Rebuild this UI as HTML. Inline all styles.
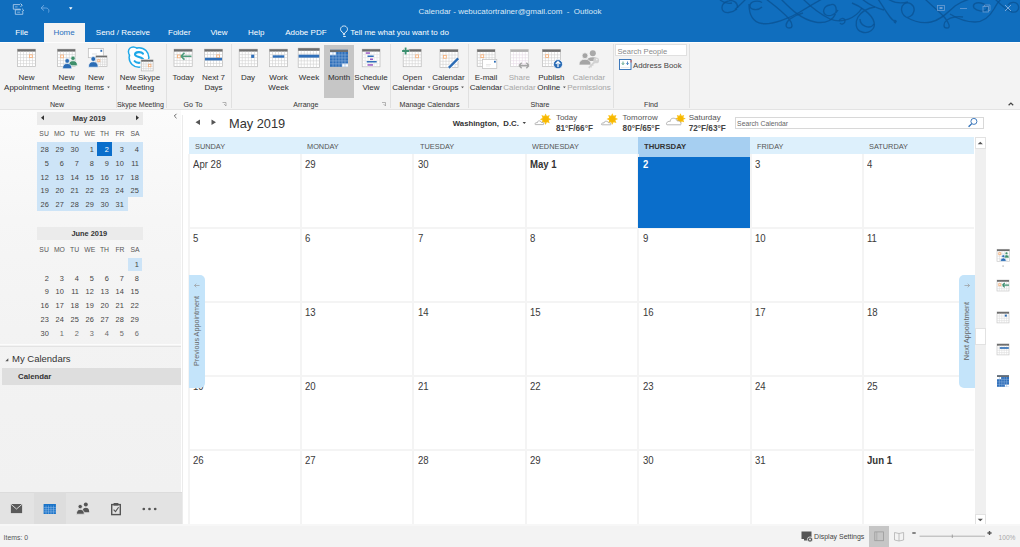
<!DOCTYPE html><html><head><meta charset="utf-8"><style>
*{margin:0;padding:0;box-sizing:border-box}
html,body{width:1020px;height:547px;overflow:hidden;background:#fff;font-family:"Liberation Sans",sans-serif;color:#444}
.a{position:absolute;white-space:nowrap;line-height:1}
.c{position:absolute;white-space:nowrap;line-height:1;transform:translateX(-50%)}
.r{position:absolute;white-space:nowrap;line-height:1;transform:translateX(-100%)}
svg{position:absolute;overflow:visible}
.s{-webkit-text-stroke:0.05px currentColor}
</style></head><body>
<div class="a" style="left:0px;top:0px;width:1020px;height:42px;background:#106ebe;"></div>
<svg style="left:700px;top:0px" width="320" height="42" viewBox="700 0 320 42"><path d="M737.5 8 C738 2 733 0 729 0.8 C723 1.8 721 6 722.5 10 C724.5 14 732 13 737 9" fill="none" stroke="#0a5294" stroke-width="1.35" opacity="0.8"/><path d="M735 9.5 C739 6 743 2 746 -1" fill="none" stroke="#0a5294" stroke-width="1.35" opacity="0.8"/><path d="M749 4 C749 14 752 22 762 23.5 C772 25 790 18 800 12 C808 7 815 3 822 -1" fill="none" stroke="#0a5294" stroke-width="1.35" opacity="0.8"/><path d="M762 2.5 C758 0 750 1 750 6 C750 10 758 11 762 7" fill="none" stroke="#0a5294" stroke-width="1.35" opacity="0.8"/><path d="M766 -1 C774 5 784 13 789 19 C793 24 793 28 789 28 C785 28 785 23 790 19 C794 16 798 14 803 13" fill="none" stroke="#0a5294" stroke-width="1.35" opacity="0.8"/><path d="M781 -1 C790 8 800 19 815 22 C826 24 834 20 836 12 C837 6 834 3 830 5 C823 6 822 13 826 15 C830 17 836 14 838 10" fill="none" stroke="#0a5294" stroke-width="1.35" opacity="0.8"/><path d="M803 -1 C808 4 816 12 830 19 C842 24 856 18 862 8" fill="none" stroke="#0a5294" stroke-width="1.35" opacity="0.8"/><path d="M839 21 C840 18 845 17 845 21 C845 24 841 25 840 23" fill="none" stroke="#0a5294" stroke-width="1.35" opacity="0.8"/><path d="M852 3 C860 6 872 14 874 22 C876 30 868 34 862 32 C855 30 855 22 858 17 C862 11 868 8 875 7" fill="none" stroke="#0a5294" stroke-width="1.35" opacity="0.8"/><path d="M860 19 C860 26 870 30 874 24" fill="none" stroke="#0a5294" stroke-width="1.35" opacity="0.8"/><path d="M862 -1 C868 4 876 8 884 10" fill="none" stroke="#0a5294" stroke-width="1.35" opacity="0.8"/><path d="M878 -1 C882 5 886 12 890 17 C893 21 897 23 896 21 C894 19 893 22 896 23" fill="none" stroke="#0a5294" stroke-width="1.35" opacity="0.8"/><path d="M906 17 C901 14 900 7 904 4 C909 1 915 5 914 11 C913 16 908 18 906 17 C913 21 922 24 931 22 C941 20 948 12 955 6 C961 2 966 0 970 -1" fill="none" stroke="#0a5294" stroke-width="1.35" opacity="0.8"/><path d="M925 -1 C932 6 940 12 945 18 C949 23 951 28 947 28 C943 28 943 23 947 20 C951 17 958 16 963 17" fill="none" stroke="#0a5294" stroke-width="1.35" opacity="0.8"/><path d="M950 14 C958 19 966 22 975 22 C984 22 990 16 994 9 C996 5 998 2 1001 -1" fill="none" stroke="#0a5294" stroke-width="1.35" opacity="0.8"/><path d="M974 8 C972 4 976 2 981 3 C986 4 989 8 986 10 C983 12 977 11 974 8" fill="none" stroke="#0a5294" stroke-width="1.35" opacity="0.8"/><path d="M995 -1 C1000 4 1006 10 1012 12 C1017 13 1020 9 1018 5 C1016 1 1010 2 1008 5" fill="none" stroke="#0a5294" stroke-width="1.35" opacity="0.8"/><path d="M888 -1 C894 3 900 4 908 2" fill="none" stroke="#0a5294" stroke-width="1.35" opacity="0.8"/><path d="M720 0 C724 3 728 4 732 3" fill="none" stroke="#0a5294" stroke-width="1.35" opacity="0.8"/></svg>
<svg style="left:930px;top:0px" width="90" height="20" viewBox="930 0 90 20"><rect x="937.5" y="5.5" width="7" height="5" fill="none" stroke="#6b9dd3" stroke-width="0.8"/><rect x="939.5" y="7" width="3" height="2" fill="#6b9dd3"/><line x1="960" y1="8.5" x2="967" y2="8.5" stroke="#6b9dd3" stroke-width="0.8"/><rect x="983" y="6.5" width="5.5" height="5.5" fill="none" stroke="#6b9dd3" stroke-width="0.8"/><path d="M984.5 6.5 V5 H990 V10.5 H988.5" fill="none" stroke="#6b9dd3" stroke-width="0.8"/><path d="M1005 5 L1011 11 M1011 5 L1005 11" stroke="#86b0df" stroke-width="0.9"/></svg>
<svg style="left:0px;top:0px" width="90" height="20" viewBox="0 0 90 20"><path d="M13.3 4.6 H20 M13.3 4.6 V9.2 H20.5" fill="none" stroke="#c4daf2" stroke-width="0.75"/><path d="M15.3 9.8 V14.3 H22.8 V11.5 M15.3 9.8 H21" fill="none" stroke="#c4daf2" stroke-width="0.75"/><path d="M15 6.9 h2.6 M17.2 12.2 h2.8" stroke="#a9c8ea" stroke-width="0.7"/><path d="M20.6 3.6 l1.6 1.6 l-1.6 1.6 M22.2 8.8 l1.4 1.4 l-1.4 1.4" fill="none" stroke="#e6f0fa" stroke-width="0.8"/><path d="M41 8 L44 5.2 M41 8 L44 10.6 M41.2 8 H45.5 C48.5 8 49.5 10 48.5 12.5" fill="none" stroke="#6aa6e0" stroke-width="1"/><path d="M69 7.2 H72.5 L70.75 9.8 Z" fill="#fff"/></svg>
<div class="c" style="left:510.00px;top:8.00px;font-size:8px;color:#dae8f6;font-weight:normal;">Calendar - webucatortrainer@gmail.com &nbsp;- &nbsp;Outlook</div>
<div class="a" style="left:44px;top:22.5px;width:41px;height:20px;background:#f3f3f3;"></div>
<div class="a" style="left:15.30px;top:29.00px;font-size:8px;color:#ffffff;font-weight:normal;">File</div>
<div class="a" style="left:95.80px;top:29.00px;font-size:8px;color:#ffffff;font-weight:normal;">Send / Receive</div>
<div class="a" style="left:168.00px;top:29.00px;font-size:8px;color:#ffffff;font-weight:normal;">Folder</div>
<div class="a" style="left:210.40px;top:29.00px;font-size:8px;color:#ffffff;font-weight:normal;">View</div>
<div class="a" style="left:248.00px;top:29.00px;font-size:8px;color:#ffffff;font-weight:normal;">Help</div>
<div class="a" style="left:285.20px;top:29.00px;font-size:8px;color:#ffffff;font-weight:normal;">Adobe PDF</div>
<div class="a" style="left:53.40px;top:29.00px;font-size:8px;color:#2a6fbd;font-weight:normal;">Home</div>
<svg style="left:330px;top:20px" width="30" height="22" viewBox="330 20 30 22"><path d="M343.2 36.5 h2.6 M343.4 34.8 V33 C341.2 31.8 340.2 30 340.6 28.6 C341.2 26.6 342.6 26 343.5 26 h1 C345.4 26 346.8 26.6 347.4 28.6 C347.8 30 346.8 31.8 344.6 33 V34.8 Z" fill="none" stroke="#fff" stroke-width="0.85"/></svg>
<div class="a" style="left:350.20px;top:29.00px;font-size:8px;color:#ffffff;font-weight:normal;">Tell me what you want to do</div>
<div class="a" style="left:0px;top:42px;width:1020px;height:67px;background:#f3f3f3;"></div>
<div class="a" style="left:0px;top:42px;width:1020px;height:1px;background:#fdfdfd;"></div>
<div class="a" style="left:0px;top:108.5px;width:1020px;height:1.5px;background:#e3e3e3;"></div>
<div class="a" style="left:115.5px;top:44px;width:1px;height:64px;background:#e0e0e0;"></div>
<div class="a" style="left:166px;top:44px;width:1px;height:64px;background:#e0e0e0;"></div>
<div class="a" style="left:231px;top:44px;width:1px;height:64px;background:#e0e0e0;"></div>
<div class="a" style="left:390px;top:44px;width:1px;height:64px;background:#e0e0e0;"></div>
<div class="a" style="left:467.5px;top:44px;width:1px;height:64px;background:#e0e0e0;"></div>
<div class="a" style="left:613px;top:44px;width:1px;height:64px;background:#e0e0e0;"></div>
<div class="a" style="left:688.5px;top:44px;width:1px;height:64px;background:#e0e0e0;"></div>
<div class="a" style="left:324px;top:45px;width:30px;height:53px;background:#c6c6c6;"></div>
<div class="c s" style="left:26.50px;top:74.00px;font-size:8px;color:#333;font-weight:normal;">New</div>
<div class="c s" style="left:26.50px;top:84.00px;font-size:8px;color:#333;font-weight:normal;">Appointment</div>
<div class="c s" style="left:66.50px;top:74.00px;font-size:8px;color:#333;font-weight:normal;">New</div>
<div class="c s" style="left:66.50px;top:84.00px;font-size:8px;color:#333;font-weight:normal;">Meeting</div>
<div class="c s" style="left:96.00px;top:74.00px;font-size:8px;color:#333;font-weight:normal;">New</div>
<div class="r s" style="left:104.10px;top:84.00px;font-size:8px;color:#333;font-weight:normal;">Items</div>
<div class="c s" style="left:140.00px;top:74.00px;font-size:8px;color:#333;font-weight:normal;">New Skype</div>
<div class="c s" style="left:140.00px;top:84.00px;font-size:8px;color:#333;font-weight:normal;">Meeting</div>
<div class="c s" style="left:183.30px;top:74.00px;font-size:8px;color:#333;font-weight:normal;">Today</div>
<div class="c s" style="left:213.50px;top:74.00px;font-size:8px;color:#333;font-weight:normal;">Next 7</div>
<div class="c s" style="left:213.50px;top:84.00px;font-size:8px;color:#333;font-weight:normal;">Days</div>
<div class="c s" style="left:248.00px;top:74.00px;font-size:8px;color:#333;font-weight:normal;">Day</div>
<div class="c s" style="left:278.50px;top:74.00px;font-size:8px;color:#333;font-weight:normal;">Work</div>
<div class="c s" style="left:278.50px;top:84.00px;font-size:8px;color:#333;font-weight:normal;">Week</div>
<div class="c s" style="left:309.00px;top:74.00px;font-size:8px;color:#333;font-weight:normal;">Week</div>
<div class="c s" style="left:339.00px;top:74.00px;font-size:8px;color:#333;font-weight:normal;">Month</div>
<div class="c s" style="left:371.00px;top:74.00px;font-size:8px;color:#333;font-weight:normal;">Schedule</div>
<div class="c s" style="left:371.00px;top:84.00px;font-size:8px;color:#333;font-weight:normal;">View</div>
<div class="c s" style="left:412.40px;top:74.00px;font-size:8px;color:#333;font-weight:normal;">Open</div>
<div class="r s" style="left:424.80px;top:84.00px;font-size:8px;color:#333;font-weight:normal;">Calendar</div>
<div class="c s" style="left:448.40px;top:74.00px;font-size:8px;color:#333;font-weight:normal;">Calendar</div>
<div class="r s" style="left:458.50px;top:84.00px;font-size:8px;color:#333;font-weight:normal;">Groups</div>
<div class="c s" style="left:486.00px;top:74.00px;font-size:8px;color:#333;font-weight:normal;">E-mail</div>
<div class="c s" style="left:486.00px;top:84.00px;font-size:8px;color:#333;font-weight:normal;">Calendar</div>
<div class="c s" style="left:519.40px;top:74.00px;font-size:8px;color:#aaaaaa;font-weight:normal;">Share</div>
<div class="c s" style="left:519.40px;top:84.00px;font-size:8px;color:#aaaaaa;font-weight:normal;">Calendar</div>
<div class="c s" style="left:551.30px;top:74.00px;font-size:8px;color:#333;font-weight:normal;">Publish</div>
<div class="r s" style="left:560.30px;top:84.00px;font-size:8px;color:#333;font-weight:normal;">Online</div>
<div class="c s" style="left:589.00px;top:74.00px;font-size:8px;color:#aaaaaa;font-weight:normal;">Calendar</div>
<div class="c s" style="left:589.00px;top:84.00px;font-size:8px;color:#aaaaaa;font-weight:normal;">Permissions</div>
<div class="c s" style="left:57.00px;top:102.00px;font-size:7.1px;color:#3a3a3a;font-weight:normal;">New</div>
<div class="c s" style="left:140.50px;top:102.00px;font-size:7.1px;color:#3a3a3a;font-weight:normal;">Skype Meeting</div>
<div class="c s" style="left:193.00px;top:102.00px;font-size:7.1px;color:#3a3a3a;font-weight:normal;">Go To</div>
<div class="c s" style="left:305.80px;top:102.00px;font-size:7.1px;color:#3a3a3a;font-weight:normal;">Arrange</div>
<div class="c s" style="left:429.50px;top:102.00px;font-size:7.1px;color:#3a3a3a;font-weight:normal;">Manage Calendars</div>
<div class="c s" style="left:540.00px;top:102.00px;font-size:7.1px;color:#3a3a3a;font-weight:normal;">Share</div>
<div class="c s" style="left:651.00px;top:102.00px;font-size:7.1px;color:#3a3a3a;font-weight:normal;">Find</div>
<svg style="left:0px;top:0px" width="1020" height="547" viewBox="0 0 1020 547"><rect x="17.5" y="49.2" width="18" height="17.4" fill="#fff" stroke="#b8b8b8" stroke-width="0.7"/><rect x="17.5" y="49.2" width="18" height="2.4" fill="#6e6e6e"/><line x1="20.50" y1="51.6" x2="20.50" y2="66.6" stroke="#d2d2d2" stroke-width="0.6"/><line x1="23.50" y1="51.6" x2="23.50" y2="66.6" stroke="#d2d2d2" stroke-width="0.6"/><line x1="26.50" y1="51.6" x2="26.50" y2="66.6" stroke="#d2d2d2" stroke-width="0.6"/><line x1="29.50" y1="51.6" x2="29.50" y2="66.6" stroke="#d2d2d2" stroke-width="0.6"/><line x1="32.50" y1="51.6" x2="32.50" y2="66.6" stroke="#d2d2d2" stroke-width="0.6"/><line x1="17.5" y1="54.60" x2="35.5" y2="54.60" stroke="#d2d2d2" stroke-width="0.6"/><line x1="17.5" y1="57.60" x2="35.5" y2="57.60" stroke="#d2d2d2" stroke-width="0.6"/><line x1="17.5" y1="60.60" x2="35.5" y2="60.60" stroke="#d2d2d2" stroke-width="0.6"/><line x1="17.5" y1="63.60" x2="35.5" y2="63.60" stroke="#d2d2d2" stroke-width="0.6"/><rect x="29.5" y="54.8" width="2.8" height="2.8" fill="#fff" stroke="#f6b07a" stroke-width="0.85"/><rect x="57.5" y="49.2" width="17.7" height="17.4" fill="#fff" stroke="#b8b8b8" stroke-width="0.7"/><rect x="57.5" y="49.2" width="17.7" height="2.4" fill="#6e6e6e"/><line x1="60.45" y1="51.6" x2="60.45" y2="66.6" stroke="#d2d2d2" stroke-width="0.6"/><line x1="63.40" y1="51.6" x2="63.40" y2="66.6" stroke="#d2d2d2" stroke-width="0.6"/><line x1="66.35" y1="51.6" x2="66.35" y2="66.6" stroke="#d2d2d2" stroke-width="0.6"/><line x1="69.30" y1="51.6" x2="69.30" y2="66.6" stroke="#d2d2d2" stroke-width="0.6"/><line x1="72.25" y1="51.6" x2="72.25" y2="66.6" stroke="#d2d2d2" stroke-width="0.6"/><line x1="57.5" y1="54.60" x2="75.2" y2="54.60" stroke="#d2d2d2" stroke-width="0.6"/><line x1="57.5" y1="57.60" x2="75.2" y2="57.60" stroke="#d2d2d2" stroke-width="0.6"/><line x1="57.5" y1="60.60" x2="75.2" y2="60.60" stroke="#d2d2d2" stroke-width="0.6"/><line x1="57.5" y1="63.60" x2="75.2" y2="63.60" stroke="#d2d2d2" stroke-width="0.6"/><rect x="60.7" y="55.0" width="2.8" height="2.8" fill="#fff" stroke="#f6b07a" stroke-width="0.85"/><circle cx="73" cy="58.3" r="2.1849999999999996" fill="#3f8f6b" stroke="#fff" stroke-width="0.6"/><path d="M68.63 65.71 Q68.63 60.769999999999996 73 60.769999999999996 Q77.37 60.769999999999996 77.37 65.71 Z" fill="#3f8f6b" stroke="#fff" stroke-width="0.6"/><circle cx="67.2" cy="60.9" r="2.3" fill="#2b6cb5" stroke="#fff" stroke-width="0.6"/><path d="M62.6 68.7 Q62.6 63.5 67.2 63.5 Q71.8 63.5 71.8 68.7 Z" fill="#2b6cb5" stroke="#fff" stroke-width="0.6"/><rect x="88.3" y="48.5" width="15" height="9.2" fill="#fff" stroke="#b8b8b8" stroke-width="0.7"/><rect x="100.4" y="49.8" width="1.8" height="2" fill="#2b6cb5"/><path d="M92 54 h5" stroke="#ccc" stroke-width="0.6"/><rect x="95.9" y="55.8" width="11.1" height="10.8" fill="#fff" stroke="#b8b8b8" stroke-width="0.7"/><rect x="95.9" y="55.8" width="11.1" height="1.6" fill="#6e6e6e"/><line x1="98.12" y1="57.4" x2="98.12" y2="66.6" stroke="#d2d2d2" stroke-width="0.6"/><line x1="100.34" y1="57.4" x2="100.34" y2="66.6" stroke="#d2d2d2" stroke-width="0.6"/><line x1="102.56" y1="57.4" x2="102.56" y2="66.6" stroke="#d2d2d2" stroke-width="0.6"/><line x1="104.78" y1="57.4" x2="104.78" y2="66.6" stroke="#d2d2d2" stroke-width="0.6"/><line x1="95.9" y1="59.70" x2="107.0" y2="59.70" stroke="#d2d2d2" stroke-width="0.6"/><line x1="95.9" y1="62.00" x2="107.0" y2="62.00" stroke="#d2d2d2" stroke-width="0.6"/><line x1="95.9" y1="64.30" x2="107.0" y2="64.30" stroke="#d2d2d2" stroke-width="0.6"/><rect x="97.8" y="59.7" width="2" height="2" fill="#fff" stroke="#f6b07a" stroke-width="0.85"/><circle cx="93.3" cy="59" r="2.415" fill="#2b6cb5" stroke="#fff" stroke-width="0.6"/><path d="M88.47 67.19 Q88.47 61.730000000000004 93.3 61.730000000000004 Q98.13 61.730000000000004 98.13 67.19 Z" fill="#2b6cb5" stroke="#fff" stroke-width="0.6"/><circle cx="139" cy="57.5" r="10.6" fill="#1ea8e8"/><circle cx="133.3" cy="51.8" r="5.6" fill="#1ea8e8"/><circle cx="144.7" cy="63.2" r="5.6" fill="#1ea8e8"/><circle cx="139" cy="57.5" r="9.1" fill="#fff"/><circle cx="133.3" cy="51.8" r="4.1" fill="#fff"/><circle cx="144.7" cy="63.2" r="4.1" fill="#fff"/><path d="M143 53.6 C141.6 51.6 135 51.4 135 54.6 C135 57.6 143.4 56.6 143.4 60.2 C143.4 63.4 136.6 63.6 134.6 61.2" fill="none" stroke="#1ea8e8" stroke-width="2.1" stroke-linecap="round"/><rect x="140.3" y="59" width="14" height="13" fill="#f3f3f3"/><rect x="141.3" y="59.9" width="11.8" height="11" fill="#fff" stroke="#b8b8b8" stroke-width="0.7"/><rect x="141.3" y="59.9" width="11.8" height="1.8" fill="#6e6e6e"/><line x1="143.66" y1="61.699999999999996" x2="143.66" y2="70.9" stroke="#d2d2d2" stroke-width="0.6"/><line x1="146.02" y1="61.699999999999996" x2="146.02" y2="70.9" stroke="#d2d2d2" stroke-width="0.6"/><line x1="148.38" y1="61.699999999999996" x2="148.38" y2="70.9" stroke="#d2d2d2" stroke-width="0.6"/><line x1="150.74" y1="61.699999999999996" x2="150.74" y2="70.9" stroke="#d2d2d2" stroke-width="0.6"/><line x1="141.3" y1="64.00" x2="153.10000000000002" y2="64.00" stroke="#d2d2d2" stroke-width="0.6"/><line x1="141.3" y1="66.30" x2="153.10000000000002" y2="66.30" stroke="#d2d2d2" stroke-width="0.6"/><line x1="141.3" y1="68.60" x2="153.10000000000002" y2="68.60" stroke="#d2d2d2" stroke-width="0.6"/><rect x="148.5" y="64.3" width="2.4" height="2.4" fill="#fff" stroke="#f6b07a" stroke-width="0.85"/><rect x="174" y="49.2" width="18.2" height="17.2" fill="#fff" stroke="#b8b8b8" stroke-width="0.7"/><rect x="174" y="49.2" width="18.2" height="2.4" fill="#6e6e6e"/><line x1="177.03" y1="51.6" x2="177.03" y2="66.4" stroke="#d2d2d2" stroke-width="0.6"/><line x1="180.07" y1="51.6" x2="180.07" y2="66.4" stroke="#d2d2d2" stroke-width="0.6"/><line x1="183.10" y1="51.6" x2="183.10" y2="66.4" stroke="#d2d2d2" stroke-width="0.6"/><line x1="186.13" y1="51.6" x2="186.13" y2="66.4" stroke="#d2d2d2" stroke-width="0.6"/><line x1="189.17" y1="51.6" x2="189.17" y2="66.4" stroke="#d2d2d2" stroke-width="0.6"/><line x1="174" y1="54.56" x2="192.2" y2="54.56" stroke="#d2d2d2" stroke-width="0.6"/><line x1="174" y1="57.52" x2="192.2" y2="57.52" stroke="#d2d2d2" stroke-width="0.6"/><line x1="174" y1="60.48" x2="192.2" y2="60.48" stroke="#d2d2d2" stroke-width="0.6"/><line x1="174" y1="63.44" x2="192.2" y2="63.44" stroke="#d2d2d2" stroke-width="0.6"/><rect x="177.5" y="55.0" width="2.8" height="2.8" fill="#fff" stroke="#f6b07a" stroke-width="0.85"/><path d="M181 56.2 H191.5 M181 56.2 L184.5 52.8 M181 56.2 L184.5 59.6" fill="none" stroke="#4f9c7c" stroke-width="1.6"/><rect x="204.5" y="49.2" width="18" height="17.2" fill="#fff" stroke="#b8b8b8" stroke-width="0.7"/><rect x="204.5" y="49.2" width="18" height="2.4" fill="#6e6e6e"/><line x1="207.50" y1="51.6" x2="207.50" y2="66.4" stroke="#d2d2d2" stroke-width="0.6"/><line x1="210.50" y1="51.6" x2="210.50" y2="66.4" stroke="#d2d2d2" stroke-width="0.6"/><line x1="213.50" y1="51.6" x2="213.50" y2="66.4" stroke="#d2d2d2" stroke-width="0.6"/><line x1="216.50" y1="51.6" x2="216.50" y2="66.4" stroke="#d2d2d2" stroke-width="0.6"/><line x1="219.50" y1="51.6" x2="219.50" y2="66.4" stroke="#d2d2d2" stroke-width="0.6"/><line x1="204.5" y1="54.56" x2="222.5" y2="54.56" stroke="#d2d2d2" stroke-width="0.6"/><line x1="204.5" y1="57.52" x2="222.5" y2="57.52" stroke="#d2d2d2" stroke-width="0.6"/><line x1="204.5" y1="60.48" x2="222.5" y2="60.48" stroke="#d2d2d2" stroke-width="0.6"/><line x1="204.5" y1="63.44" x2="222.5" y2="63.44" stroke="#d2d2d2" stroke-width="0.6"/><rect x="216.7" y="54.9" width="2.8" height="2.8" fill="#fff" stroke="#f6b07a" stroke-width="0.85"/><rect x="205" y="57.8" width="17" height="2.6" fill="#2f6fba"/><rect x="239.2" y="49.2" width="18.3" height="17.5" fill="#fff" stroke="#b8b8b8" stroke-width="0.7"/><rect x="239.2" y="49.2" width="18.3" height="2.4" fill="#6e6e6e"/><line x1="242.25" y1="51.6" x2="242.25" y2="66.7" stroke="#d2d2d2" stroke-width="0.6"/><line x1="245.30" y1="51.6" x2="245.30" y2="66.7" stroke="#d2d2d2" stroke-width="0.6"/><line x1="248.35" y1="51.6" x2="248.35" y2="66.7" stroke="#d2d2d2" stroke-width="0.6"/><line x1="251.40" y1="51.6" x2="251.40" y2="66.7" stroke="#d2d2d2" stroke-width="0.6"/><line x1="254.45" y1="51.6" x2="254.45" y2="66.7" stroke="#d2d2d2" stroke-width="0.6"/><line x1="239.2" y1="54.62" x2="257.5" y2="54.62" stroke="#d2d2d2" stroke-width="0.6"/><line x1="239.2" y1="57.64" x2="257.5" y2="57.64" stroke="#d2d2d2" stroke-width="0.6"/><line x1="239.2" y1="60.66" x2="257.5" y2="60.66" stroke="#d2d2d2" stroke-width="0.6"/><line x1="239.2" y1="63.68" x2="257.5" y2="63.68" stroke="#d2d2d2" stroke-width="0.6"/><rect x="251.2" y="54.7" width="3" height="3.2" fill="#2f6fba"/><rect x="269.5" y="49.2" width="18" height="17.5" fill="#fff" stroke="#b8b8b8" stroke-width="0.7"/><rect x="269.5" y="49.2" width="18" height="2.4" fill="#6e6e6e"/><line x1="272.50" y1="51.6" x2="272.50" y2="66.7" stroke="#d2d2d2" stroke-width="0.6"/><line x1="275.50" y1="51.6" x2="275.50" y2="66.7" stroke="#d2d2d2" stroke-width="0.6"/><line x1="278.50" y1="51.6" x2="278.50" y2="66.7" stroke="#d2d2d2" stroke-width="0.6"/><line x1="281.50" y1="51.6" x2="281.50" y2="66.7" stroke="#d2d2d2" stroke-width="0.6"/><line x1="284.50" y1="51.6" x2="284.50" y2="66.7" stroke="#d2d2d2" stroke-width="0.6"/><line x1="269.5" y1="54.62" x2="287.5" y2="54.62" stroke="#d2d2d2" stroke-width="0.6"/><line x1="269.5" y1="57.64" x2="287.5" y2="57.64" stroke="#d2d2d2" stroke-width="0.6"/><line x1="269.5" y1="60.66" x2="287.5" y2="60.66" stroke="#d2d2d2" stroke-width="0.6"/><line x1="269.5" y1="63.68" x2="287.5" y2="63.68" stroke="#d2d2d2" stroke-width="0.6"/><rect x="272.8" y="55.3" width="11.4" height="2.4" fill="#2f6fba"/><rect x="298.2" y="48.2" width="21.3" height="19.3" fill="#fff" stroke="#b8b8b8" stroke-width="0.7"/><rect x="298.2" y="48.2" width="21.3" height="2.6" fill="#6e6e6e"/><line x1="301.24" y1="50.800000000000004" x2="301.24" y2="67.5" stroke="#d2d2d2" stroke-width="0.6"/><line x1="304.29" y1="50.800000000000004" x2="304.29" y2="67.5" stroke="#d2d2d2" stroke-width="0.6"/><line x1="307.33" y1="50.800000000000004" x2="307.33" y2="67.5" stroke="#d2d2d2" stroke-width="0.6"/><line x1="310.37" y1="50.800000000000004" x2="310.37" y2="67.5" stroke="#d2d2d2" stroke-width="0.6"/><line x1="313.41" y1="50.800000000000004" x2="313.41" y2="67.5" stroke="#d2d2d2" stroke-width="0.6"/><line x1="316.46" y1="50.800000000000004" x2="316.46" y2="67.5" stroke="#d2d2d2" stroke-width="0.6"/><line x1="298.2" y1="54.14" x2="319.5" y2="54.14" stroke="#d2d2d2" stroke-width="0.6"/><line x1="298.2" y1="57.48" x2="319.5" y2="57.48" stroke="#d2d2d2" stroke-width="0.6"/><line x1="298.2" y1="60.82" x2="319.5" y2="60.82" stroke="#d2d2d2" stroke-width="0.6"/><line x1="298.2" y1="64.16" x2="319.5" y2="64.16" stroke="#d2d2d2" stroke-width="0.6"/><rect x="298.6" y="54.7" width="20.6" height="2.9" fill="#2f6fba"/><rect x="330" y="49.8" width="18" height="17" fill="#2f6fba"/><rect x="330" y="49.8" width="18" height="2.2" fill="#6e6e6e"/><rect x="330" y="52.2" width="6" height="3" fill="#fff"/><rect x="342" y="63.5" width="6" height="3.3" fill="#fff"/><line x1="333" y1="52" x2="333" y2="66.8" stroke="#8fb3dc" stroke-width="0.6"/><line x1="336" y1="52" x2="336" y2="66.8" stroke="#8fb3dc" stroke-width="0.6"/><line x1="339" y1="52" x2="339" y2="66.8" stroke="#8fb3dc" stroke-width="0.6"/><line x1="342" y1="52" x2="342" y2="66.8" stroke="#8fb3dc" stroke-width="0.6"/><line x1="345" y1="52" x2="345" y2="66.8" stroke="#8fb3dc" stroke-width="0.6"/><line x1="330" y1="54.96" x2="348" y2="54.96" stroke="#8fb3dc" stroke-width="0.6"/><line x1="330" y1="57.92" x2="348" y2="57.92" stroke="#8fb3dc" stroke-width="0.6"/><line x1="330" y1="60.88" x2="348" y2="60.88" stroke="#8fb3dc" stroke-width="0.6"/><line x1="330" y1="63.84" x2="348" y2="63.84" stroke="#8fb3dc" stroke-width="0.6"/><rect x="362.2" y="49.2" width="17.8" height="17.6" fill="#fff" stroke="#b8b8b8" stroke-width="0.7"/><rect x="362.2" y="49.2" width="17.8" height="2.4" fill="#6e6e6e"/><line x1="365.17" y1="51.6" x2="365.17" y2="66.80000000000001" stroke="#e0e0e0" stroke-width="0.6"/><line x1="368.13" y1="51.6" x2="368.13" y2="66.80000000000001" stroke="#e0e0e0" stroke-width="0.6"/><line x1="371.10" y1="51.6" x2="371.10" y2="66.80000000000001" stroke="#e0e0e0" stroke-width="0.6"/><line x1="374.07" y1="51.6" x2="374.07" y2="66.80000000000001" stroke="#e0e0e0" stroke-width="0.6"/><line x1="377.03" y1="51.6" x2="377.03" y2="66.80000000000001" stroke="#e0e0e0" stroke-width="0.6"/><line x1="362.2" y1="54.64" x2="380.0" y2="54.64" stroke="#e0e0e0" stroke-width="0.6"/><line x1="362.2" y1="57.68" x2="380.0" y2="57.68" stroke="#e0e0e0" stroke-width="0.6"/><line x1="362.2" y1="60.72" x2="380.0" y2="60.72" stroke="#e0e0e0" stroke-width="0.6"/><line x1="362.2" y1="63.76" x2="380.0" y2="63.76" stroke="#e0e0e0" stroke-width="0.6"/><rect x="365.8" y="52.3" width="4.2" height="1.5" fill="#9b59c5"/><rect x="367.5" y="55.5" width="6.2" height="1.5" fill="#2f6fba"/><rect x="370" y="58.5" width="3" height="1.5" fill="#9b59c5"/><rect x="366.7" y="61" width="10" height="1.5" fill="#2f6fba"/><rect x="367.5" y="64.2" width="5.5" height="1.5" fill="#9b59c5"/><rect x="403.2" y="49.3" width="18" height="17.4" fill="#fff" stroke="#b8b8b8" stroke-width="0.7"/><rect x="403.2" y="49.3" width="18" height="2.4" fill="#6e6e6e"/><line x1="406.20" y1="51.699999999999996" x2="406.20" y2="66.69999999999999" stroke="#d2d2d2" stroke-width="0.6"/><line x1="409.20" y1="51.699999999999996" x2="409.20" y2="66.69999999999999" stroke="#d2d2d2" stroke-width="0.6"/><line x1="412.20" y1="51.699999999999996" x2="412.20" y2="66.69999999999999" stroke="#d2d2d2" stroke-width="0.6"/><line x1="415.20" y1="51.699999999999996" x2="415.20" y2="66.69999999999999" stroke="#d2d2d2" stroke-width="0.6"/><line x1="418.20" y1="51.699999999999996" x2="418.20" y2="66.69999999999999" stroke="#d2d2d2" stroke-width="0.6"/><line x1="403.2" y1="54.70" x2="421.2" y2="54.70" stroke="#d2d2d2" stroke-width="0.6"/><line x1="403.2" y1="57.70" x2="421.2" y2="57.70" stroke="#d2d2d2" stroke-width="0.6"/><line x1="403.2" y1="60.70" x2="421.2" y2="60.70" stroke="#d2d2d2" stroke-width="0.6"/><line x1="403.2" y1="63.70" x2="421.2" y2="63.70" stroke="#d2d2d2" stroke-width="0.6"/><rect x="415.7" y="54.9" width="2.8" height="2.8" fill="#fff" stroke="#f6b07a" stroke-width="0.85"/><path d="M405.6 47.3 V54.7 M401.9 51 H409.3" stroke="#fff" stroke-width="3.2"/><path d="M405.6 47.5 V54.5 M402.1 51 H409.1" stroke="#3c9070" stroke-width="1.9"/><rect x="440" y="49.5" width="18" height="18" fill="#fff" stroke="#b8b8b8" stroke-width="0.7"/><rect x="440" y="49.5" width="18" height="2.4" fill="#6e6e6e"/><line x1="443.00" y1="51.9" x2="443.00" y2="67.5" stroke="#d2d2d2" stroke-width="0.6"/><line x1="446.00" y1="51.9" x2="446.00" y2="67.5" stroke="#d2d2d2" stroke-width="0.6"/><line x1="449.00" y1="51.9" x2="449.00" y2="67.5" stroke="#d2d2d2" stroke-width="0.6"/><line x1="452.00" y1="51.9" x2="452.00" y2="67.5" stroke="#d2d2d2" stroke-width="0.6"/><line x1="455.00" y1="51.9" x2="455.00" y2="67.5" stroke="#d2d2d2" stroke-width="0.6"/><line x1="440" y1="55.02" x2="458" y2="55.02" stroke="#d2d2d2" stroke-width="0.6"/><line x1="440" y1="58.14" x2="458" y2="58.14" stroke="#d2d2d2" stroke-width="0.6"/><line x1="440" y1="61.26" x2="458" y2="61.26" stroke="#d2d2d2" stroke-width="0.6"/><line x1="440" y1="64.38" x2="458" y2="64.38" stroke="#d2d2d2" stroke-width="0.6"/><rect x="443.5" y="55.4" width="2.8" height="2.8" fill="#fff" stroke="#f6b07a" stroke-width="0.85"/><path d="M448.6 68 L458.2 58.4" stroke="#fff" stroke-width="3.6"/><path d="M448.8 67.8 L458.2 58.4" stroke="#2b6cb5" stroke-width="2.4"/><rect x="477.2" y="49.5" width="17.8" height="16.8" fill="#fff" stroke="#b8b8b8" stroke-width="0.7"/><rect x="477.2" y="49.5" width="17.8" height="2.4" fill="#6e6e6e"/><line x1="480.17" y1="51.9" x2="480.17" y2="66.3" stroke="#d2d2d2" stroke-width="0.6"/><line x1="483.13" y1="51.9" x2="483.13" y2="66.3" stroke="#d2d2d2" stroke-width="0.6"/><line x1="486.10" y1="51.9" x2="486.10" y2="66.3" stroke="#d2d2d2" stroke-width="0.6"/><line x1="489.07" y1="51.9" x2="489.07" y2="66.3" stroke="#d2d2d2" stroke-width="0.6"/><line x1="492.03" y1="51.9" x2="492.03" y2="66.3" stroke="#d2d2d2" stroke-width="0.6"/><line x1="477.2" y1="54.78" x2="495.0" y2="54.78" stroke="#d2d2d2" stroke-width="0.6"/><line x1="477.2" y1="57.66" x2="495.0" y2="57.66" stroke="#d2d2d2" stroke-width="0.6"/><line x1="477.2" y1="60.54" x2="495.0" y2="60.54" stroke="#d2d2d2" stroke-width="0.6"/><line x1="477.2" y1="63.42" x2="495.0" y2="63.42" stroke="#d2d2d2" stroke-width="0.6"/><rect x="480.9" y="54.8" width="2.8" height="2.8" fill="#fff" stroke="#f6b07a" stroke-width="0.85"/><rect x="482.4" y="59.4" width="14.4" height="9" fill="#fff" stroke="#bdbdbd" stroke-width="0.7"/><rect x="494" y="60.8" width="1.8" height="1.8" fill="#2b6cb5"/><path d="M486 64.5 h5 M486 66 h4" stroke="#d5d5d5" stroke-width="0.5"/><rect x="510.5" y="49.5" width="17.8" height="17" fill="#fff" stroke="#cfcfcf" stroke-width="0.7"/><rect x="510.5" y="49.5" width="17.8" height="2.4" fill="#b0b0b0"/><line x1="513.47" y1="51.9" x2="513.47" y2="66.5" stroke="#e8dce8" stroke-width="0.6"/><line x1="516.43" y1="51.9" x2="516.43" y2="66.5" stroke="#e8dce8" stroke-width="0.6"/><line x1="519.40" y1="51.9" x2="519.40" y2="66.5" stroke="#e8dce8" stroke-width="0.6"/><line x1="522.37" y1="51.9" x2="522.37" y2="66.5" stroke="#e8dce8" stroke-width="0.6"/><line x1="525.33" y1="51.9" x2="525.33" y2="66.5" stroke="#e8dce8" stroke-width="0.6"/><line x1="510.5" y1="54.82" x2="528.3" y2="54.82" stroke="#e8dce8" stroke-width="0.6"/><line x1="510.5" y1="57.74" x2="528.3" y2="57.74" stroke="#e8dce8" stroke-width="0.6"/><line x1="510.5" y1="60.66" x2="528.3" y2="60.66" stroke="#e8dce8" stroke-width="0.6"/><line x1="510.5" y1="63.58" x2="528.3" y2="63.58" stroke="#e8dce8" stroke-width="0.6"/><path d="M519 65.5 H529 M519 65.5 L521.7 62.8 M519 65.5 L521.7 68.2 M529 65.5 L526.3 62.8 M529 65.5 L526.3 68.2" fill="none" stroke="#a5a5a5" stroke-width="1.4"/><rect x="542.4" y="49.5" width="18.2" height="17" fill="#fff" stroke="#b8b8b8" stroke-width="0.7"/><rect x="542.4" y="49.5" width="18.2" height="2.4" fill="#6e6e6e"/><line x1="545.43" y1="51.9" x2="545.43" y2="66.5" stroke="#d2d2d2" stroke-width="0.6"/><line x1="548.47" y1="51.9" x2="548.47" y2="66.5" stroke="#d2d2d2" stroke-width="0.6"/><line x1="551.50" y1="51.9" x2="551.50" y2="66.5" stroke="#d2d2d2" stroke-width="0.6"/><line x1="554.53" y1="51.9" x2="554.53" y2="66.5" stroke="#d2d2d2" stroke-width="0.6"/><line x1="557.57" y1="51.9" x2="557.57" y2="66.5" stroke="#d2d2d2" stroke-width="0.6"/><line x1="542.4" y1="54.82" x2="560.6" y2="54.82" stroke="#d2d2d2" stroke-width="0.6"/><line x1="542.4" y1="57.74" x2="560.6" y2="57.74" stroke="#d2d2d2" stroke-width="0.6"/><line x1="542.4" y1="60.66" x2="560.6" y2="60.66" stroke="#d2d2d2" stroke-width="0.6"/><line x1="542.4" y1="63.58" x2="560.6" y2="63.58" stroke="#d2d2d2" stroke-width="0.6"/><rect x="545.7" y="54.7" width="2.8" height="2.8" fill="#fff" stroke="#f6b07a" stroke-width="0.85"/><circle cx="558" cy="64.2" r="4.6" fill="#2b6cb5" stroke="#fff" stroke-width="0.8"/><path d="M558 67 V61.8 M555.8 63.8 L558 61.5 L560.2 63.8" fill="none" stroke="#fff" stroke-width="1.2"/><circle cx="592.8" cy="53.3" r="3" fill="#a9a9a9"/><path d="M587 61 Q587 57.3 592.8 57.3 Q598.4 57.3 598.4 61 Z" fill="#a9a9a9"/><circle cx="585" cy="55.7" r="2.9" fill="#a5a5a5" stroke="#f3f3f3" stroke-width="0.7"/><path d="M579 65 Q579 59.3 585 59.3 Q591 59.3 591 65 Z" fill="#a5a5a5" stroke="#f3f3f3" stroke-width="0.7"/><path d="M588.8 67.8 L594.6 62" stroke="#d2d2d2" stroke-width="1.8"/><path d="M590.6 66 l1.4 1.4 M592 64.6 l1.2 1.2" stroke="#d2d2d2" stroke-width="1"/><circle cx="596.2" cy="60.4" r="2.9" fill="#d2d2d2"/><circle cx="596.8" cy="59.6" r="0.8" fill="#f3f3f3"/><rect x="619.5" y="59.5" width="11.5" height="10" fill="#fff" stroke="#2b6cb5" stroke-width="0.9"/><path d="M623 61.5 V64.5 M621.8 63.3 L623 64.6 L624.2 63.3" stroke="#3c9070" stroke-width="0.8" fill="none"/><path d="M627.5 61.5 V64.5 M626.3 63.3 L627.5 64.6 L628.7 63.3" stroke="#2b6cb5" stroke-width="0.8" fill="none"/><rect x="630.6" y="60" width="0.9" height="2.5" fill="#d04030"/><path d="M621 67.5 H629.5" stroke="#ddd" stroke-width="0.6"/><path d="M107.1 86.6 H109.9 L108.5 88.2 Z" fill="#555"/><path d="M427.70000000000005 86.6 H430.5 L429.1 88.2 Z" fill="#555"/><path d="M461.1 86.6 H463.9 L462.5 88.2 Z" fill="#555"/><path d="M563.0 86.6 H565.8 L564.4 88.2 Z" fill="#555"/><path d="M222.5 102.5 h3.5 v3.5 M224 104 l2 2" fill="none" stroke="#8a8a8a" stroke-width="0.6"/><path d="M382 102.5 h3.5 v3.5 M383.5 104 l2 2" fill="none" stroke="#8a8a8a" stroke-width="0.6"/><path d="M1008.6 105.2 L1010.9 103 L1013.2 105.2" fill="none" stroke="#444" stroke-width="1.2"/></svg>
<div class="a" style="left:615.4px;top:44.3px;width:71.4px;height:12px;background:#ffffff;border:1px solid #e0e0e0"></div>
<div class="a" style="left:617.40px;top:48.00px;font-size:7.6px;color:#8a8a8a;font-weight:normal;">Search People</div>
<div class="a" style="left:633.00px;top:62.00px;font-size:7.8px;color:#444;font-weight:normal;">Address Book</div>
<div class="a" style="left:0px;top:110px;width:181px;height:417px;background:linear-gradient(#fbfbfb 0px,#f6f6f6 110px,#f3f3f3 220px,#f1f1f1 380px);"></div>
<div class="a" style="left:181.9px;top:115px;width:1.5px;height:412px;background:#ebebeb;"></div>
<svg style="left:170px;top:110px" width="10" height="10" viewBox="170 110 10 10"><path d="M176.5 113.8 L174.3 116 L176.5 118.2" fill="none" stroke="#555" stroke-width="0.9"/></svg>
<div class="a" style="left:37px;top:111.5px;width:106px;height:13px;background:#ebebeb;"></div>
<svg style="left:36px;top:110px" width="108" height="15" viewBox="36 110 108 15"><path d="M41 117.8 L44 115.3 V120.3 Z M139 117.8 L136 115.3 V120.3 Z" fill="#333"/></svg>
<div class="c" style="left:89.30px;top:115.00px;font-size:7.4px;color:#333;font-weight:bold;">May 2019</div>
<div class="c" style="left:44.10px;top:131.00px;font-size:6.8px;color:#555;font-weight:normal;">SU</div>
<div class="c" style="left:59.40px;top:131.00px;font-size:6.8px;color:#555;font-weight:normal;">MO</div>
<div class="c" style="left:74.60px;top:131.00px;font-size:6.8px;color:#555;font-weight:normal;">TU</div>
<div class="c" style="left:89.70px;top:131.00px;font-size:6.8px;color:#555;font-weight:normal;">WE</div>
<div class="c" style="left:104.50px;top:131.00px;font-size:6.8px;color:#555;font-weight:normal;">TH</div>
<div class="c" style="left:120.00px;top:131.00px;font-size:6.8px;color:#555;font-weight:normal;">FR</div>
<div class="c" style="left:135.00px;top:131.00px;font-size:6.8px;color:#555;font-weight:normal;">SA</div>
<div class="a" style="left:37px;top:142px;width:106px;height:55px;background:#cde4f7;"></div>
<div class="a" style="left:37px;top:197px;width:90.5px;height:13.8px;background:#cde4f7;"></div>
<div class="a" style="left:97.2px;top:142px;width:15.2px;height:13.6px;background:#0a6ecb;"></div>
<div class="r" style="left:48.80px;top:146.00px;font-size:7.4px;color:#444;font-weight:normal;">28</div>
<div class="r" style="left:63.80px;top:146.00px;font-size:7.4px;color:#444;font-weight:normal;">29</div>
<div class="r" style="left:78.80px;top:146.00px;font-size:7.4px;color:#444;font-weight:normal;">30</div>
<div class="r" style="left:93.80px;top:146.00px;font-size:7.4px;color:#444;font-weight:normal;">1</div>
<div class="r" style="left:108.80px;top:146.00px;font-size:7.4px;color:#fff;font-weight:normal;">2</div>
<div class="r" style="left:123.80px;top:146.00px;font-size:7.4px;color:#444;font-weight:normal;">3</div>
<div class="r" style="left:138.80px;top:146.00px;font-size:7.4px;color:#444;font-weight:normal;">4</div>
<div class="r" style="left:48.80px;top:160.00px;font-size:7.4px;color:#444;font-weight:normal;">5</div>
<div class="r" style="left:63.80px;top:160.00px;font-size:7.4px;color:#444;font-weight:normal;">6</div>
<div class="r" style="left:78.80px;top:160.00px;font-size:7.4px;color:#444;font-weight:normal;">7</div>
<div class="r" style="left:93.80px;top:160.00px;font-size:7.4px;color:#444;font-weight:normal;">8</div>
<div class="r" style="left:108.80px;top:160.00px;font-size:7.4px;color:#444;font-weight:normal;">9</div>
<div class="r" style="left:123.80px;top:160.00px;font-size:7.4px;color:#444;font-weight:normal;">10</div>
<div class="r" style="left:138.80px;top:160.00px;font-size:7.4px;color:#444;font-weight:normal;">11</div>
<div class="r" style="left:48.80px;top:174.00px;font-size:7.4px;color:#444;font-weight:normal;">12</div>
<div class="r" style="left:63.80px;top:174.00px;font-size:7.4px;color:#444;font-weight:normal;">13</div>
<div class="r" style="left:78.80px;top:174.00px;font-size:7.4px;color:#444;font-weight:normal;">14</div>
<div class="r" style="left:93.80px;top:174.00px;font-size:7.4px;color:#444;font-weight:normal;">15</div>
<div class="r" style="left:108.80px;top:174.00px;font-size:7.4px;color:#444;font-weight:normal;">16</div>
<div class="r" style="left:123.80px;top:174.00px;font-size:7.4px;color:#444;font-weight:normal;">17</div>
<div class="r" style="left:138.80px;top:174.00px;font-size:7.4px;color:#444;font-weight:normal;">18</div>
<div class="r" style="left:48.80px;top:187.00px;font-size:7.4px;color:#444;font-weight:normal;">19</div>
<div class="r" style="left:63.80px;top:187.00px;font-size:7.4px;color:#444;font-weight:normal;">20</div>
<div class="r" style="left:78.80px;top:187.00px;font-size:7.4px;color:#444;font-weight:normal;">21</div>
<div class="r" style="left:93.80px;top:187.00px;font-size:7.4px;color:#444;font-weight:normal;">22</div>
<div class="r" style="left:108.80px;top:187.00px;font-size:7.4px;color:#444;font-weight:normal;">23</div>
<div class="r" style="left:123.80px;top:187.00px;font-size:7.4px;color:#444;font-weight:normal;">24</div>
<div class="r" style="left:138.80px;top:187.00px;font-size:7.4px;color:#444;font-weight:normal;">25</div>
<div class="r" style="left:48.80px;top:201.00px;font-size:7.4px;color:#444;font-weight:normal;">26</div>
<div class="r" style="left:63.80px;top:201.00px;font-size:7.4px;color:#444;font-weight:normal;">27</div>
<div class="r" style="left:78.80px;top:201.00px;font-size:7.4px;color:#444;font-weight:normal;">28</div>
<div class="r" style="left:93.80px;top:201.00px;font-size:7.4px;color:#444;font-weight:normal;">29</div>
<div class="r" style="left:108.80px;top:201.00px;font-size:7.4px;color:#444;font-weight:normal;">30</div>
<div class="r" style="left:123.80px;top:201.00px;font-size:7.4px;color:#444;font-weight:normal;">31</div>
<div class="a" style="left:37px;top:226.5px;width:106px;height:13.5px;background:#ebebeb;"></div>
<div class="c" style="left:89.30px;top:230.00px;font-size:7.4px;color:#333;font-weight:bold;">June 2019</div>
<div class="c" style="left:44.10px;top:247.00px;font-size:6.8px;color:#555;font-weight:normal;">SU</div>
<div class="c" style="left:59.40px;top:247.00px;font-size:6.8px;color:#555;font-weight:normal;">MO</div>
<div class="c" style="left:74.60px;top:247.00px;font-size:6.8px;color:#555;font-weight:normal;">TU</div>
<div class="c" style="left:89.70px;top:247.00px;font-size:6.8px;color:#555;font-weight:normal;">WE</div>
<div class="c" style="left:104.50px;top:247.00px;font-size:6.8px;color:#555;font-weight:normal;">TH</div>
<div class="c" style="left:120.00px;top:247.00px;font-size:6.8px;color:#555;font-weight:normal;">FR</div>
<div class="c" style="left:135.00px;top:247.00px;font-size:6.8px;color:#555;font-weight:normal;">SA</div>
<div class="a" style="left:127.6px;top:257.6px;width:14.8px;height:13.4px;background:#cde4f7;"></div>
<div class="r" style="left:138.80px;top:261.00px;font-size:7.4px;color:#444;font-weight:normal;">1</div>
<div class="r" style="left:48.80px;top:275.00px;font-size:7.4px;color:#444;font-weight:normal;">2</div>
<div class="r" style="left:63.80px;top:275.00px;font-size:7.4px;color:#444;font-weight:normal;">3</div>
<div class="r" style="left:78.80px;top:275.00px;font-size:7.4px;color:#444;font-weight:normal;">4</div>
<div class="r" style="left:93.80px;top:275.00px;font-size:7.4px;color:#444;font-weight:normal;">5</div>
<div class="r" style="left:108.80px;top:275.00px;font-size:7.4px;color:#444;font-weight:normal;">6</div>
<div class="r" style="left:123.80px;top:275.00px;font-size:7.4px;color:#444;font-weight:normal;">7</div>
<div class="r" style="left:138.80px;top:275.00px;font-size:7.4px;color:#444;font-weight:normal;">8</div>
<div class="r" style="left:48.80px;top:288.00px;font-size:7.4px;color:#444;font-weight:normal;">9</div>
<div class="r" style="left:63.80px;top:288.00px;font-size:7.4px;color:#444;font-weight:normal;">10</div>
<div class="r" style="left:78.80px;top:288.00px;font-size:7.4px;color:#444;font-weight:normal;">11</div>
<div class="r" style="left:93.80px;top:288.00px;font-size:7.4px;color:#444;font-weight:normal;">12</div>
<div class="r" style="left:108.80px;top:288.00px;font-size:7.4px;color:#444;font-weight:normal;">13</div>
<div class="r" style="left:123.80px;top:288.00px;font-size:7.4px;color:#444;font-weight:normal;">14</div>
<div class="r" style="left:138.80px;top:288.00px;font-size:7.4px;color:#444;font-weight:normal;">15</div>
<div class="r" style="left:48.80px;top:302.00px;font-size:7.4px;color:#444;font-weight:normal;">16</div>
<div class="r" style="left:63.80px;top:302.00px;font-size:7.4px;color:#444;font-weight:normal;">17</div>
<div class="r" style="left:78.80px;top:302.00px;font-size:7.4px;color:#444;font-weight:normal;">18</div>
<div class="r" style="left:93.80px;top:302.00px;font-size:7.4px;color:#444;font-weight:normal;">19</div>
<div class="r" style="left:108.80px;top:302.00px;font-size:7.4px;color:#444;font-weight:normal;">20</div>
<div class="r" style="left:123.80px;top:302.00px;font-size:7.4px;color:#444;font-weight:normal;">21</div>
<div class="r" style="left:138.80px;top:302.00px;font-size:7.4px;color:#444;font-weight:normal;">22</div>
<div class="r" style="left:48.80px;top:316.00px;font-size:7.4px;color:#444;font-weight:normal;">23</div>
<div class="r" style="left:63.80px;top:316.00px;font-size:7.4px;color:#444;font-weight:normal;">24</div>
<div class="r" style="left:78.80px;top:316.00px;font-size:7.4px;color:#444;font-weight:normal;">25</div>
<div class="r" style="left:93.80px;top:316.00px;font-size:7.4px;color:#444;font-weight:normal;">26</div>
<div class="r" style="left:108.80px;top:316.00px;font-size:7.4px;color:#444;font-weight:normal;">27</div>
<div class="r" style="left:123.80px;top:316.00px;font-size:7.4px;color:#444;font-weight:normal;">28</div>
<div class="r" style="left:138.80px;top:316.00px;font-size:7.4px;color:#444;font-weight:normal;">29</div>
<div class="r" style="left:48.80px;top:330.00px;font-size:7.4px;color:#444;font-weight:normal;">30</div>
<div class="r" style="left:63.80px;top:330.00px;font-size:7.4px;color:#6a6a6a;font-weight:normal;">1</div>
<div class="r" style="left:78.80px;top:330.00px;font-size:7.4px;color:#6a6a6a;font-weight:normal;">2</div>
<div class="r" style="left:93.80px;top:330.00px;font-size:7.4px;color:#6a6a6a;font-weight:normal;">3</div>
<div class="r" style="left:108.80px;top:330.00px;font-size:7.4px;color:#6a6a6a;font-weight:normal;">4</div>
<div class="r" style="left:123.80px;top:330.00px;font-size:7.4px;color:#6a6a6a;font-weight:normal;">5</div>
<div class="r" style="left:138.80px;top:330.00px;font-size:7.4px;color:#6a6a6a;font-weight:normal;">6</div>
<div class="a" style="left:0px;top:343.5px;width:181px;height:1px;background:#fcfcfc;"></div>
<div class="a" style="left:0px;top:346px;width:181px;height:1px;background:#e3e3e3;"></div>
<svg style="left:0px;top:350px" width="20" height="20" viewBox="0 350 20 20"><path d="M5.3 361.2 L8.3 358.2 V361.2 Z" fill="#555"/></svg>
<div class="a" style="left:12.00px;top:354.00px;font-size:9.5px;color:#333;font-weight:normal;">My Calendars</div>
<div class="a" style="left:1.5px;top:368.3px;width:179.5px;height:16.7px;background:#dedede;"></div>
<div class="a" style="left:18.00px;top:373.00px;font-size:7.8px;color:#333;font-weight:bold;">Calendar</div>
<div class="a" style="left:0px;top:492.3px;width:182px;height:33px;background:#e3e3e3;"></div>
<div class="a" style="left:0px;top:492px;width:182px;height:1px;background:#dcdcdc;"></div>
<div class="a" style="left:33.6px;top:492.3px;width:32.6px;height:33px;background:#dddddd;"></div>
<svg style="left:0px;top:490px" width="190" height="40" viewBox="0 490 190 40"><rect x="10.9" y="504" width="11.2" height="9.1" fill="#5a5a5a"/><path d="M10.9 504.2 L16.5 509 L22.1 504.2" fill="none" stroke="#e3e3e3" stroke-width="0.9"/><rect x="43.6" y="504" width="12.3" height="10" fill="#1a73c8"/><line x1="46.06" y1="505.5" x2="46.06" y2="514" stroke="#9cc3ea" stroke-width="0.5"/><line x1="48.52" y1="505.5" x2="48.52" y2="514" stroke="#9cc3ea" stroke-width="0.5"/><line x1="50.98" y1="505.5" x2="50.98" y2="514" stroke="#9cc3ea" stroke-width="0.5"/><line x1="53.44" y1="505.5" x2="53.44" y2="514" stroke="#9cc3ea" stroke-width="0.5"/><line x1="43.6" y1="507.62" x2="55.9" y2="507.62" stroke="#9cc3ea" stroke-width="0.5"/><line x1="43.6" y1="509.75" x2="55.9" y2="509.75" stroke="#9cc3ea" stroke-width="0.5"/><line x1="43.6" y1="511.88" x2="55.9" y2="511.88" stroke="#9cc3ea" stroke-width="0.5"/><circle cx="85.8" cy="504.6" r="2" fill="#555"/><path d="M82.4 512.2 Q82.4 507.7 85.9 507.7 Q89.3 507.7 89.3 512.2 Z" fill="#555"/><circle cx="80.2" cy="506.6" r="2.2" fill="#555" stroke="#e3e3e3" stroke-width="0.8"/><path d="M76.4 514.2 Q76.4 509.4 80.3 509.4 Q84.3 509.4 84.3 514.2 Z" fill="#555" stroke="#e3e3e3" stroke-width="0.8"/><rect x="111.7" y="504.6" width="8.6" height="10" fill="none" stroke="#555" stroke-width="1.4"/><rect x="113.6" y="503" width="4.8" height="2.6" fill="#555"/><path d="M113.6 509.6 L115.5 511.6 L118.6 507.2" fill="none" stroke="#555" stroke-width="1.1"/><circle cx="143.8" cy="509" r="1.35" fill="#555"/><circle cx="149.5" cy="509" r="1.35" fill="#555"/><circle cx="155.2" cy="509" r="1.35" fill="#555"/></svg>
<div class="a" style="left:183.4px;top:110px;width:802.5px;height:417px;background:#ffffff;"></div>
<svg style="left:190px;top:112px" width="30" height="20" viewBox="190 112 30 20"><path d="M200 119.5 L195.5 122.3 L200 125.1 Z M211.5 119.5 L216 122.3 L211.5 125.1 Z" fill="#555"/></svg>
<div class="a" style="left:229.00px;top:118.00px;font-size:12.8px;color:#333;font-weight:normal;">May 2019</div>
<div class="a" style="left:452.80px;top:120.00px;font-size:7.75px;color:#333;font-weight:bold;">Washington, &nbsp;D.C.</div>
<svg style="left:515px;top:115px" width="15" height="15" viewBox="515 115 15 15"><path d="M522.6 122 H526 L524.3 124 Z" fill="#444"/></svg>
<svg style="left:530px;top:108px" width="160" height="22" viewBox="530 108 160 22"><polygon points="545.60,113.40 546.90,116.06 549.70,115.10 548.74,117.90 551.40,119.20 548.74,120.50 549.70,123.30 546.90,122.34 545.60,125.00 544.30,122.34 541.50,123.30 542.46,120.50 539.80,119.20 542.46,117.90 541.50,115.10 544.30,116.06" fill="#fbc21a"/><circle cx="545.6" cy="119.2" r="2.90" fill="#f6b800"/><path d="M535.5 124.6 H543.3 C544.3 124.6 544.3 122.0 541.35 122.39999999999999 C540.96 120.19999999999999 537.06 120.39999999999999 537.45 122.6 C534.5 122.39999999999999 534.5 124.6 535.5 124.6 Z" fill="#fff" stroke="#9a9a9a" stroke-width="0.7"/><polygon points="612.30,113.20 613.60,115.86 616.40,114.90 615.44,117.70 618.10,119.00 615.44,120.30 616.40,123.10 613.60,122.14 612.30,124.80 611.00,122.14 608.20,123.10 609.16,120.30 606.50,119.00 609.16,117.70 608.20,114.90 611.00,115.86" fill="#fbc21a"/><circle cx="612.3" cy="119" r="2.90" fill="#f6b800"/><path d="M602 124.8 H610.5 C611.5 124.8 611.5 122.33 608.375 122.71 C607.95 120.62 603.7 120.81 604.125 122.9 C601 122.71 601 124.8 602 124.8 Z" fill="#fff" stroke="#9a9a9a" stroke-width="0.7"/><polygon points="680.50,113.34 681.68,115.75 684.22,114.88 683.35,117.42 685.76,118.60 683.35,119.78 684.22,122.32 681.68,121.45 680.50,123.86 679.32,121.45 676.78,122.32 677.65,119.78 675.24,118.60 677.65,117.42 676.78,114.88 679.32,115.75" fill="#fbc21a"/><circle cx="680.5" cy="118.6" r="2.63" fill="#f6b800"/><path d="M667 124.8 H680.5 C681.5 124.8 681.5 120.25 677.125 120.95 C676.45 117.1 669.7 117.45 670.375 121.3 C666 120.95 666 124.8 667 124.8 Z" fill="#fff" stroke="#9a9a9a" stroke-width="0.7"/></svg>
<div class="a" style="left:555.90px;top:114.00px;font-size:8px;color:#555;font-weight:normal;">Today</div>
<div class="a" style="left:555.90px;top:125.00px;font-size:8.2px;color:#444;font-weight:bold;">81°F/66°F</div>
<div class="a" style="left:622.60px;top:114.00px;font-size:8px;color:#555;font-weight:normal;">Tomorrow</div>
<div class="a" style="left:622.60px;top:125.00px;font-size:8.2px;color:#444;font-weight:bold;">80°F/65°F</div>
<div class="a" style="left:688.70px;top:114.00px;font-size:8px;color:#555;font-weight:normal;">Saturday</div>
<div class="a" style="left:688.70px;top:125.00px;font-size:8.2px;color:#444;font-weight:bold;">72°F/63°F</div>
<div class="a" style="left:734.8px;top:117.1px;width:249.7px;height:11.7px;background:#fff;border:1px solid #d8d8d8"></div>
<div class="a" style="left:737.10px;top:121.00px;font-size:6.8px;color:#666;font-weight:normal;">Search Calendar</div>
<svg style="left:960px;top:112px" width="25" height="20" viewBox="960 112 25 20"><circle cx="973.9" cy="121.4" r="3" fill="none" stroke="#2b6cb5" stroke-width="0.9"/><path d="M971.8 123.6 L968.6 126.8" stroke="#2b6cb5" stroke-width="1.3"/></svg>
<div class="a" style="left:188.7px;top:137.2px;width:785.8px;height:16.6px;background:#ddf0fc;"></div>
<div class="a" style="left:638px;top:137px;width:112px;height:20px;background:#a6cff1;"></div>
<div class="a" style="left:194.90px;top:143.00px;font-size:8px;color:#555;font-weight:normal;transform:scaleX(0.92);transform-origin:0 0">SUNDAY</div>
<div class="a" style="left:307.20px;top:143.00px;font-size:8px;color:#555;font-weight:normal;transform:scaleX(0.92);transform-origin:0 0">MONDAY</div>
<div class="a" style="left:419.60px;top:143.00px;font-size:8px;color:#555;font-weight:normal;transform:scaleX(0.92);transform-origin:0 0">TUESDAY</div>
<div class="a" style="left:532.00px;top:143.00px;font-size:8px;color:#555;font-weight:normal;transform:scaleX(0.92);transform-origin:0 0">WEDNESDAY</div>
<div class="a" style="left:644.40px;top:143.00px;font-size:8px;color:#333;font-weight:bold;transform:scaleX(0.965);transform-origin:0 0">THURSDAY</div>
<div class="a" style="left:756.80px;top:143.00px;font-size:8px;color:#555;font-weight:normal;transform:scaleX(0.92);transform-origin:0 0">FRIDAY</div>
<div class="a" style="left:869.20px;top:143.00px;font-size:8px;color:#555;font-weight:normal;transform:scaleX(0.92);transform-origin:0 0">SATURDAY</div>
<div class="a" style="left:188.7px;top:227px;width:785.8px;height:2px;background:#f4f4f4;"></div>
<div class="a" style="left:188.7px;top:301px;width:785.8px;height:2px;background:#f4f4f4;"></div>
<div class="a" style="left:188.7px;top:375px;width:785.8px;height:2px;background:#f4f4f4;"></div>
<div class="a" style="left:188.7px;top:449px;width:785.8px;height:2px;background:#f4f4f4;"></div>
<div class="a" style="left:300px;top:153.8px;width:2px;height:370.4px;background:#f4f4f4;"></div>
<div class="a" style="left:412.4px;top:153.8px;width:2px;height:370.4px;background:#f4f4f4;"></div>
<div class="a" style="left:524.8px;top:153.8px;width:2px;height:370.4px;background:#f4f4f4;"></div>
<div class="a" style="left:637.2px;top:153.8px;width:2px;height:370.4px;background:#f4f4f4;"></div>
<div class="a" style="left:749.6px;top:153.8px;width:2px;height:370.4px;background:#f4f4f4;"></div>
<div class="a" style="left:862px;top:153.8px;width:2px;height:370.4px;background:#f4f4f4;"></div>
<div class="a" style="left:188px;top:153.8px;width:2px;height:370.4px;background:#f4f4f4;"></div>
<div class="a" style="left:638px;top:157px;width:112px;height:70.5px;background:#0a6ecb;"></div>
<div class="a" style="left:193.00px;top:160.00px;font-size:10.1px;color:#3a3a3a;font-weight:normal;transform:scaleX(0.95);transform-origin:0 0">Apr 28</div>
<div class="a" style="left:305.30px;top:160.00px;font-size:10.1px;color:#3a3a3a;font-weight:normal;transform:scaleX(0.95);transform-origin:0 0">29</div>
<div class="a" style="left:417.70px;top:160.00px;font-size:10.1px;color:#3a3a3a;font-weight:normal;transform:scaleX(0.95);transform-origin:0 0">30</div>
<div class="a" style="left:530.10px;top:160.00px;font-size:10.1px;color:#333;font-weight:bold;transform:scaleX(0.95);transform-origin:0 0">May 1</div>
<div class="a" style="left:642.50px;top:160.00px;font-size:10.1px;color:#fff;font-weight:bold;transform:scaleX(0.95);transform-origin:0 0">2</div>
<div class="a" style="left:754.90px;top:160.00px;font-size:10.1px;color:#3a3a3a;font-weight:normal;transform:scaleX(0.95);transform-origin:0 0">3</div>
<div class="a" style="left:867.30px;top:160.00px;font-size:10.1px;color:#3a3a3a;font-weight:normal;transform:scaleX(0.95);transform-origin:0 0">4</div>
<div class="a" style="left:193.00px;top:234.00px;font-size:10.1px;color:#3a3a3a;font-weight:normal;transform:scaleX(0.95);transform-origin:0 0">5</div>
<div class="a" style="left:305.30px;top:234.00px;font-size:10.1px;color:#3a3a3a;font-weight:normal;transform:scaleX(0.95);transform-origin:0 0">6</div>
<div class="a" style="left:417.70px;top:234.00px;font-size:10.1px;color:#3a3a3a;font-weight:normal;transform:scaleX(0.95);transform-origin:0 0">7</div>
<div class="a" style="left:530.10px;top:234.00px;font-size:10.1px;color:#3a3a3a;font-weight:normal;transform:scaleX(0.95);transform-origin:0 0">8</div>
<div class="a" style="left:642.50px;top:234.00px;font-size:10.1px;color:#3a3a3a;font-weight:normal;transform:scaleX(0.95);transform-origin:0 0">9</div>
<div class="a" style="left:754.90px;top:234.00px;font-size:10.1px;color:#3a3a3a;font-weight:normal;transform:scaleX(0.95);transform-origin:0 0">10</div>
<div class="a" style="left:867.30px;top:234.00px;font-size:10.1px;color:#3a3a3a;font-weight:normal;transform:scaleX(0.95);transform-origin:0 0">11</div>
<div class="a" style="left:193.00px;top:308.00px;font-size:10.1px;color:#3a3a3a;font-weight:normal;transform:scaleX(0.95);transform-origin:0 0">12</div>
<div class="a" style="left:305.30px;top:308.00px;font-size:10.1px;color:#3a3a3a;font-weight:normal;transform:scaleX(0.95);transform-origin:0 0">13</div>
<div class="a" style="left:417.70px;top:308.00px;font-size:10.1px;color:#3a3a3a;font-weight:normal;transform:scaleX(0.95);transform-origin:0 0">14</div>
<div class="a" style="left:530.10px;top:308.00px;font-size:10.1px;color:#3a3a3a;font-weight:normal;transform:scaleX(0.95);transform-origin:0 0">15</div>
<div class="a" style="left:642.50px;top:308.00px;font-size:10.1px;color:#3a3a3a;font-weight:normal;transform:scaleX(0.95);transform-origin:0 0">16</div>
<div class="a" style="left:754.90px;top:308.00px;font-size:10.1px;color:#3a3a3a;font-weight:normal;transform:scaleX(0.95);transform-origin:0 0">17</div>
<div class="a" style="left:867.30px;top:308.00px;font-size:10.1px;color:#3a3a3a;font-weight:normal;transform:scaleX(0.95);transform-origin:0 0">18</div>
<div class="a" style="left:193.00px;top:382.00px;font-size:10.1px;color:#3a3a3a;font-weight:normal;transform:scaleX(0.95);transform-origin:0 0">19</div>
<div class="a" style="left:305.30px;top:382.00px;font-size:10.1px;color:#3a3a3a;font-weight:normal;transform:scaleX(0.95);transform-origin:0 0">20</div>
<div class="a" style="left:417.70px;top:382.00px;font-size:10.1px;color:#3a3a3a;font-weight:normal;transform:scaleX(0.95);transform-origin:0 0">21</div>
<div class="a" style="left:530.10px;top:382.00px;font-size:10.1px;color:#3a3a3a;font-weight:normal;transform:scaleX(0.95);transform-origin:0 0">22</div>
<div class="a" style="left:642.50px;top:382.00px;font-size:10.1px;color:#3a3a3a;font-weight:normal;transform:scaleX(0.95);transform-origin:0 0">23</div>
<div class="a" style="left:754.90px;top:382.00px;font-size:10.1px;color:#3a3a3a;font-weight:normal;transform:scaleX(0.95);transform-origin:0 0">24</div>
<div class="a" style="left:867.30px;top:382.00px;font-size:10.1px;color:#3a3a3a;font-weight:normal;transform:scaleX(0.95);transform-origin:0 0">25</div>
<div class="a" style="left:193.00px;top:456.00px;font-size:10.1px;color:#3a3a3a;font-weight:normal;transform:scaleX(0.95);transform-origin:0 0">26</div>
<div class="a" style="left:305.30px;top:456.00px;font-size:10.1px;color:#3a3a3a;font-weight:normal;transform:scaleX(0.95);transform-origin:0 0">27</div>
<div class="a" style="left:417.70px;top:456.00px;font-size:10.1px;color:#3a3a3a;font-weight:normal;transform:scaleX(0.95);transform-origin:0 0">28</div>
<div class="a" style="left:530.10px;top:456.00px;font-size:10.1px;color:#3a3a3a;font-weight:normal;transform:scaleX(0.95);transform-origin:0 0">29</div>
<div class="a" style="left:642.50px;top:456.00px;font-size:10.1px;color:#3a3a3a;font-weight:normal;transform:scaleX(0.95);transform-origin:0 0">30</div>
<div class="a" style="left:754.90px;top:456.00px;font-size:10.1px;color:#3a3a3a;font-weight:normal;transform:scaleX(0.95);transform-origin:0 0">31</div>
<div class="a" style="left:867.30px;top:456.00px;font-size:10.1px;color:#333;font-weight:bold;transform:scaleX(0.95);transform-origin:0 0">Jun 1</div>
<div class="a" style="left:188.7px;top:275px;width:16px;height:112.7px;background:#c4e4fa;border-radius:0 5px 5px 0"></div>
<div class="a" style="left:958.8px;top:275px;width:16px;height:112.6px;background:#c4e4fa;border-radius:5px 0 0 5px"></div>
<svg style="left:0px;top:0px" width="1020" height="547" viewBox="0 0 1020 547"><path d="M199.5 285.5 H194.5 M196.3 283.7 L194.5 285.5 L196.3 287.3" fill="none" stroke="#999" stroke-width="0.7"/><path d="M964.5 285.5 H969.5 M967.7 283.7 L969.5 285.5 L967.7 287.3" fill="none" stroke="#999" stroke-width="0.7"/></svg>
<div class="a" style="left:196.5px;top:331px;font-size:7.2px;color:#666;transform:translate(-50%,-50%) rotate(-90deg)">Previous Appointment</div>
<div class="a" style="left:966.8px;top:331px;font-size:7.4px;color:#666;transform:translate(-50%,-50%) rotate(-90deg)">Next Appointment</div>
<div class="a" style="left:974.5px;top:137.2px;width:11.4px;height:388px;background:#f0f0f0;"></div>
<div class="a" style="left:975px;top:137.3px;width:10.9px;height:11.3px;background:#ffffff;border:1px solid #e2e2e2"></div>
<div class="a" style="left:975px;top:514.2px;width:10.9px;height:11px;background:#ffffff;border:1px solid #e2e2e2"></div>
<div class="a" style="left:975px;top:327.8px;width:10.5px;height:17px;background:#ffffff;border:1px solid #e2e2e2"></div>
<svg style="left:970px;top:135px" width="20" height="390" viewBox="970 135 20 390"><path d="M977.7 144.3 L980.3 141.7 L982.9 144.3 Z M977.7 518.7 L980.3 521.3 L982.9 518.7 Z" fill="#555"/></svg>
<div class="a" style="left:985.9px;top:110px;width:34.1px;height:417px;background:#ffffff;"></div>
<svg style="left:990px;top:240px" width="30" height="150" viewBox="990 240 30 150"><rect x="997" y="249.3" width="12.5" height="12" fill="#fff" stroke="#c8c8c8" stroke-width="0.7"/><rect x="997" y="249.3" width="12.5" height="1.8" fill="#6e6e6e"/><line x1="999.50" y1="251.10000000000002" x2="999.50" y2="261.3" stroke="#dedede" stroke-width="0.6"/><line x1="1002.00" y1="251.10000000000002" x2="1002.00" y2="261.3" stroke="#dedede" stroke-width="0.6"/><line x1="1004.50" y1="251.10000000000002" x2="1004.50" y2="261.3" stroke="#dedede" stroke-width="0.6"/><line x1="1007.00" y1="251.10000000000002" x2="1007.00" y2="261.3" stroke="#dedede" stroke-width="0.6"/><line x1="997" y1="253.65" x2="1009.5" y2="253.65" stroke="#dedede" stroke-width="0.6"/><line x1="997" y1="256.20" x2="1009.5" y2="256.20" stroke="#dedede" stroke-width="0.6"/><line x1="997" y1="258.75" x2="1009.5" y2="258.75" stroke="#dedede" stroke-width="0.6"/><rect x="998.8" y="252.7" width="2" height="2" fill="#fff" stroke="#f6b07a" stroke-width="0.85"/><circle cx="1006.5" cy="253.3" r="1.38" fill="#3f8f6b" stroke="#fff" stroke-width="0.6"/><path d="M1003.74 257.98 Q1003.74 254.86 1006.5 254.86 Q1009.26 254.86 1009.26 257.98 Z" fill="#3f8f6b" stroke="#fff" stroke-width="0.6"/><circle cx="1003.3" cy="256.3" r="1.4949999999999999" fill="#2b6cb5" stroke="#fff" stroke-width="0.6"/><path d="M1000.31 261.37 Q1000.31 257.99 1003.3 257.99 Q1006.29 257.99 1006.29 261.37 Z" fill="#2b6cb5" stroke="#fff" stroke-width="0.6"/><rect x="1002.6" y="265.6" width="0.9" height="0.9" fill="#555"/><rect x="997" y="280" width="12" height="11" fill="#fff" stroke="#c8c8c8" stroke-width="0.7"/><rect x="997" y="280" width="12" height="1.8" fill="#6e6e6e"/><line x1="999.40" y1="281.8" x2="999.40" y2="291" stroke="#dedede" stroke-width="0.6"/><line x1="1001.80" y1="281.8" x2="1001.80" y2="291" stroke="#dedede" stroke-width="0.6"/><line x1="1004.20" y1="281.8" x2="1004.20" y2="291" stroke="#dedede" stroke-width="0.6"/><line x1="1006.60" y1="281.8" x2="1006.60" y2="291" stroke="#dedede" stroke-width="0.6"/><line x1="997" y1="284.10" x2="1009" y2="284.10" stroke="#dedede" stroke-width="0.6"/><line x1="997" y1="286.40" x2="1009" y2="286.40" stroke="#dedede" stroke-width="0.6"/><line x1="997" y1="288.70" x2="1009" y2="288.70" stroke="#dedede" stroke-width="0.6"/><rect x="998.8" y="283.7" width="2" height="2" fill="#fff" stroke="#f6b07a" stroke-width="0.85"/><path d="M1002.5 285.2 H1009 M1002.5 285.2 L1004.7 283 M1002.5 285.2 L1004.7 287.4" fill="none" stroke="#3c9070" stroke-width="1.2"/><rect x="997" y="311.9" width="12" height="11" fill="#fff" stroke="#c8c8c8" stroke-width="0.7"/><rect x="997" y="311.9" width="12" height="1.8" fill="#6e6e6e"/><line x1="999.40" y1="313.7" x2="999.40" y2="322.9" stroke="#dedede" stroke-width="0.6"/><line x1="1001.80" y1="313.7" x2="1001.80" y2="322.9" stroke="#dedede" stroke-width="0.6"/><line x1="1004.20" y1="313.7" x2="1004.20" y2="322.9" stroke="#dedede" stroke-width="0.6"/><line x1="1006.60" y1="313.7" x2="1006.60" y2="322.9" stroke="#dedede" stroke-width="0.6"/><line x1="997" y1="316.00" x2="1009" y2="316.00" stroke="#dedede" stroke-width="0.6"/><line x1="997" y1="318.30" x2="1009" y2="318.30" stroke="#dedede" stroke-width="0.6"/><line x1="997" y1="320.60" x2="1009" y2="320.60" stroke="#dedede" stroke-width="0.6"/><rect x="1004.8" y="314.6" width="2" height="2" fill="#2b6cb5"/><rect x="997" y="343.9" width="12" height="11" fill="#fff" stroke="#c8c8c8" stroke-width="0.7"/><rect x="997" y="343.9" width="12" height="1.8" fill="#6e6e6e"/><line x1="999.40" y1="345.7" x2="999.40" y2="354.9" stroke="#dedede" stroke-width="0.6"/><line x1="1001.80" y1="345.7" x2="1001.80" y2="354.9" stroke="#dedede" stroke-width="0.6"/><line x1="1004.20" y1="345.7" x2="1004.20" y2="354.9" stroke="#dedede" stroke-width="0.6"/><line x1="1006.60" y1="345.7" x2="1006.60" y2="354.9" stroke="#dedede" stroke-width="0.6"/><line x1="997" y1="348.00" x2="1009" y2="348.00" stroke="#dedede" stroke-width="0.6"/><line x1="997" y1="350.30" x2="1009" y2="350.30" stroke="#dedede" stroke-width="0.6"/><line x1="997" y1="352.60" x2="1009" y2="352.60" stroke="#dedede" stroke-width="0.6"/><rect x="999.8" y="347.2" width="9" height="1.6" fill="#2b6cb5"/><rect x="997" y="375.3" width="12" height="11.5" fill="#2f6fba"/><rect x="997" y="375.3" width="12" height="1.6" fill="#6e6e6e"/><rect x="997" y="377" width="4" height="2" fill="#fff"/><rect x="1005" y="384.6" width="4" height="2.2" fill="#fff"/><line x1="999.40" y1="377" x2="999.40" y2="386.8" stroke="#8fb3dc" stroke-width="0.5"/><line x1="1001.80" y1="377" x2="1001.80" y2="386.8" stroke="#8fb3dc" stroke-width="0.5"/><line x1="1004.20" y1="377" x2="1004.20" y2="386.8" stroke="#8fb3dc" stroke-width="0.5"/><line x1="1006.60" y1="377" x2="1006.60" y2="386.8" stroke="#8fb3dc" stroke-width="0.5"/><line x1="997" y1="379.45" x2="1009" y2="379.45" stroke="#8fb3dc" stroke-width="0.5"/><line x1="997" y1="381.90" x2="1009" y2="381.90" stroke="#8fb3dc" stroke-width="0.5"/><line x1="997" y1="384.35" x2="1009" y2="384.35" stroke="#8fb3dc" stroke-width="0.5"/></svg>
<div class="a" style="left:0px;top:524.2px;width:1020px;height:2.3px;background:#f7f7f7;"></div>
<div class="a" style="left:0px;top:526.3px;width:1020px;height:20.7px;background:#f3f3f3;"></div>
<div class="a" style="left:3.60px;top:535.00px;font-size:6.9px;color:#555;font-weight:normal;">Items: 0</div>
<svg style="left:795px;top:528px" width="20" height="18" viewBox="795 528 20 18"><rect x="801.5" y="531.5" width="10" height="7.5" fill="#555"/><rect x="804" y="539" width="4" height="1.5" fill="#555"/><circle cx="810" cy="539.5" r="2.6" fill="#555" stroke="#f3f3f3" stroke-width="0.8"/><circle cx="810" cy="539.5" r="0.9" fill="#f3f3f3"/></svg>
<div class="a" style="left:814.10px;top:533.00px;font-size:7.0px;color:#444;font-weight:normal;">Display Settings</div>
<div class="a" style="left:869.4px;top:526.3px;width:19.4px;height:20.7px;background:#c6c6c6;"></div>
<svg style="left:860px;top:526px" width="140" height="21" viewBox="860 526 140 21"><rect x="874.8" y="531.9" width="8.8" height="8.8" fill="none" stroke="#9a9a9a" stroke-width="0.8"/><path d="M876.8 532 V540.6" stroke="#9a9a9a" stroke-width="0.6"/><path d="M894.5 532.5 L899 533.5 L903.6 532.5 V540 L899 541 L894.5 540 Z M899 533.5 V541" fill="none" stroke="#b0b0b0" stroke-width="0.8"/><path d="M912.3 533 H915.7" stroke="#555" stroke-width="1.4"/><path d="M919.6 536.2 H985" stroke="#a0a0a0" stroke-width="0.8"/><path d="M952.3 534.5 V538" stroke="#888" stroke-width="0.7"/><path d="M987.4 533 H991.6 M989.5 530.9 V535.1" stroke="#555" stroke-width="1.4"/></svg>
<div class="a" style="left:998.60px;top:535.00px;font-size:6.6px;color:#a8a8a8;font-weight:normal;">100%</div>
</body></html>
